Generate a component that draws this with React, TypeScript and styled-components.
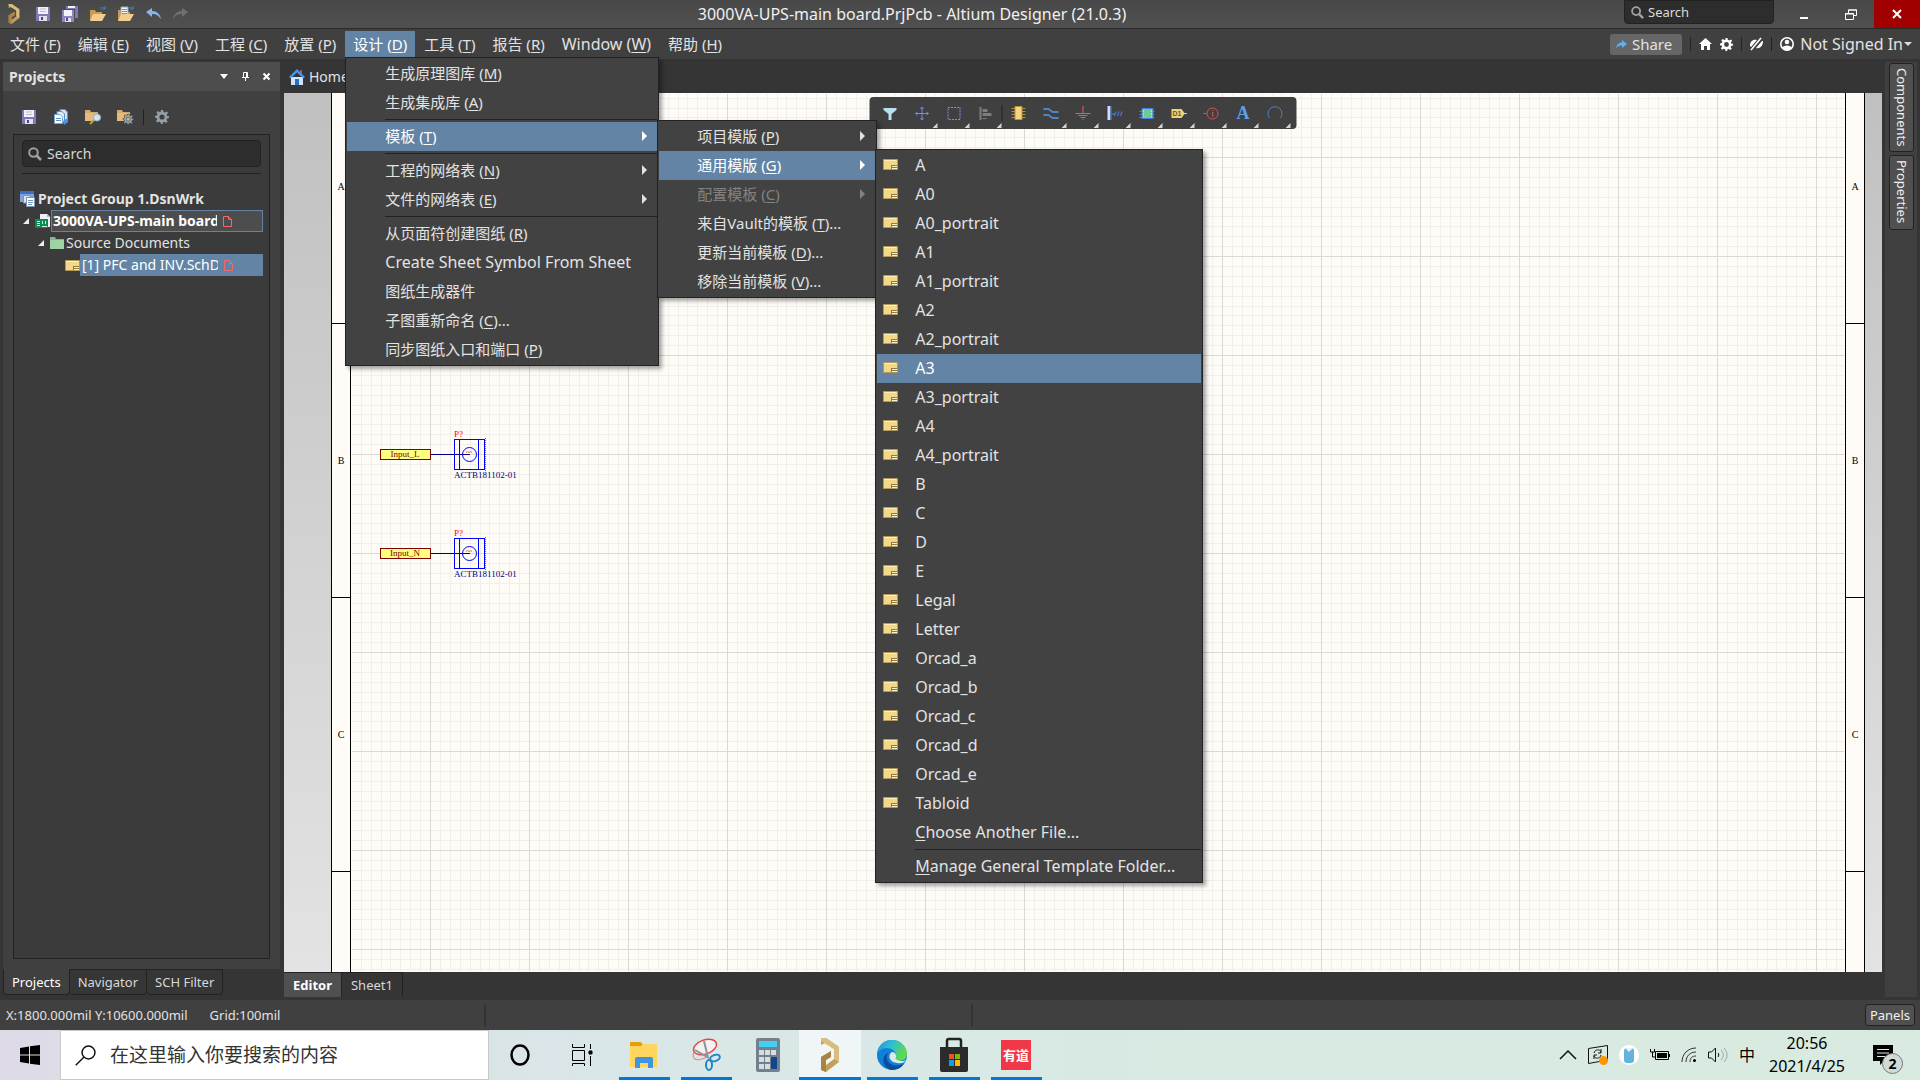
import React from "react";
import styled, { createGlobalStyle, css } from "styled-components";

const UI_FONT = `"Noto Sans", "Noto Sans CJK SC", sans-serif`;
const c = {
  frame: "#353535",
  panel: "#404040",
  line: "#222222",
  text: "#e2e2e2",
  accent: "#6384a4",
};

const GlobalStyle = createGlobalStyle`
  *, *::before, *::after { box-sizing: border-box; }
  body { margin: 0; overflow: hidden; }
  button, input { font: inherit; color: inherit; border: 0; padding: 0; background: none; outline: 0; }
  ul { list-style: none; margin: 0; padding: 0; }
  svg { display: block; flex: none; overflow: visible; }
  u { text-underline-offset: 2px; }
`;

const Screen = styled.div`
  height: 100vh;
  display: flex;
  flex-direction: column;
  background: ${c.frame};
  color: ${c.text};
  font: 14px/20px ${UI_FONT};
`;

/* ---------- title bar ---------- */
const TitleBar = styled.header`
  height: 29px;
  flex: none;
  display: flex;
  align-items: stretch;
  background: linear-gradient(#484848, #505050);
  border-bottom: 1px solid #2b2b2b;
`;
const QuickTools = styled.div`
  display: flex;
  align-items: center;
  gap: 12px;
  padding-left: 4px;
  width: 200px;
`;
const IconButton = styled.button`
  display: grid;
  place-items: center;
`;
const Title = styled.h1`
  flex: 1;
  margin: 0;
  font-size: 16px;
  font-weight: 400;
  line-height: 28px;
  text-align: center;
  color: #f0f0f0;
`;
const TitleSearch = styled.label`
  display: flex;
  align-items: center;
  gap: 4px;
  width: 150px;
  height: 24px;
  padding: 0 6px;
  margin-right: 8px;
  background: #2d2d2d;
  border: 1px solid ${c.line};
  border-radius: 0 0 4px 4px;
  input { width: 100%; font-size: 13px; }
  input::placeholder { color: #dcdcdc; opacity: 1; }
`;
const WindowButton = styled.button<{ $close?: boolean }>`
  width: 46px;
  height: 28px;
  display: grid;
  place-items: center;
  background: ${(p) => (p.$close ? "#a00000" : "transparent")};
`;

/* ---------- menu bar ---------- */
const MenuBar = styled.nav`
  height: 30px;
  flex: none;
  display: flex;
  justify-content: space-between;
  padding: 2px 8px 2px 2px;
  background: ${c.panel};
  font-size: 15px;
`;
const MenuTitles = styled.ul`
  display: flex;
  gap: 1px;
`;
const MenuSlot = styled.li`
  position: relative;
`;
const MenuTitle = styled.button<{ $open?: boolean }>`
  height: 26px;
  padding: 0 8px;
  line-height: 26px;
  white-space: nowrap;
  background: ${(p) => (p.$open ? c.accent : "transparent")};
  color: ${(p) => (p.$open ? "#fff" : c.text)};
`;
const CaptionText = styled.span<{ $latin: boolean }>`
  font-size: ${(p) => (p.$latin ? 16 : 15)}px;
`;
const Account = styled.div`
  display: flex;
  align-items: center;
  gap: 8px;
  height: 26px;
`;
const ShareButton = styled.button`
  display: flex;
  align-items: center;
  gap: 5px;
  height: 21px;
  padding: 0 10px 0 6px;
  border-radius: 3px;
  background: #666;
`;
const AccountButton = styled.button`
  display: flex;
  align-items: center;
  gap: 6px;
  white-space: nowrap;
  font-size: 16px;
`;
const Caret = styled.span`
  border: 4px solid transparent;
  border-top-color: #ddd;
  border-bottom: 0;
  margin-left: -5px;
`;
const Rule = styled.span<{ $h: number }>`
  width: 1px;
  height: ${(p) => p.$h}px;
  background: #222;
`;

/* ---------- drop-down menus ---------- */
const Menu = styled.ul<{ $width: number; $sub?: boolean }>`
  position: absolute;
  z-index: 10;
  top: ${(p) => (p.$sub ? "-2px" : "100%")};
  left: ${(p) => (p.$sub ? "100%" : "0")};
  width: ${(p) => p.$width}px;
  padding: 1px;
  border: 1px solid ${c.line};
  background: #424242;
  box-shadow: 3px 3px 4px rgba(0, 0, 0, 0.35);
`;
const MenuRow = styled.li`
  position: relative;
`;
const MenuButton = styled.button<{ $active?: boolean }>`
  display: grid;
  grid-template-columns: 32px 1fr 6px;
  align-items: center;
  width: 100%;
  height: 29px;
  padding: 0 9px 2px 6px;
  text-align: left;
  white-space: nowrap;
  line-height: 26px;
  color: ${(p) => (p.$active ? "#fff" : c.text)};
  background: ${(p) => (p.$active ? c.accent : "transparent")};
  &:disabled { color: #828282; }
`;
const Arrow = styled.span`
  border: 5px solid transparent;
  border-left-color: currentColor;
  border-right: 0;
`;
const Separator = styled.li`
  height: 5px;
  margin-left: 38px;
  padding-top: 2px;
  &::before { content: ""; display: block; height: 1px; background: ${c.line}; }
`;

/* ---------- body ---------- */
const Workspace = styled.main`
  flex: 1;
  min-height: 0;
  display: flex;
`;
const Side = styled.aside`
  width: 281px;
  flex: none;
  display: flex;
  flex-direction: column;
  padding: 3px 1px 5px 3px;
`;
const Panel = styled.section`
  flex: 1;
  min-height: 0;
  display: flex;
  flex-direction: column;
  padding-bottom: 10px;
  background: ${c.panel};
`;
const PanelHeader = styled.header`
  height: 29px;
  display: flex;
  align-items: center;
  gap: 14px;
  padding: 0 10px 0 6px;
  background: #4d4d4d;
`;
const PanelName = styled.h2`
  flex: 1;
  margin: 0;
  font-size: 14px;
  font-weight: 700;
`;
const PanelTools = styled.div`
  height: 43px;
  display: flex;
  align-items: center;
  gap: 4px;
  padding: 9px 0 0 12px;
  > button { width: 28px; }
`;
const TreeBox = styled.div`
  flex: 1;
  margin: 0 10px;
  padding: 5px 8px;
  border: 1px solid ${c.line};
  background: #3b3b3b;
`;
const PanelSearch = styled.label`
  display: flex;
  align-items: center;
  gap: 5px;
  height: 27px;
  padding: 0 5px;
  border: 1px solid ${c.line};
  border-radius: 4px;
  background: #2d2d2d;
  input { width: 100%; }
  input::placeholder { color: #d6d6d6; opacity: 1; }
`;
const Tree = styled.ul`
  margin-top: 6px;
  padding-top: 14px;
  border-top: 1px solid ${c.line};
`;
const TreeRow = styled.li<{ $depth: number }>`
  display: flex;
  align-items: center;
  height: 22px;
  padding-left: ${(p) => p.$depth * 15}px;
  margin-left: -2px;
  margin-right: -2px;
  font-weight: ${(p) => (p.$depth < 1 ? 700 : 400)};
`;
const Expander = styled.span`
  width: 6px;
  height: 6px;
  margin: 0 6px 0 3px;
  background: #eee;
  clip-path: polygon(100% 0, 100% 100%, 0 100%);
`;
const TreeLabel = styled.span<{ $kind?: "focus" | "select" }>`
  flex: 1;
  min-width: 0;
  height: 22px;
  display: flex;
  align-items: center;
  gap: 6px;
  padding-left: 2px;
  ${(p) =>
    p.$kind === "focus" &&
    css`border: 1px solid ${c.accent}; background: #4d4d4d; color: #fff; font-weight: 700; padding-left: 1px;`}
  ${(p) => p.$kind === "select" && css`background: ${c.accent}; color: #fff;`}
  > span { flex: 1; overflow: hidden; white-space: nowrap; }
  > svg { margin-right: 30px; }
`;
const PanelTabs = styled.div`
  display: flex;
  height: 26px;
`;
const PanelTab = styled.button<{ $active?: boolean }>`
  padding: 0 8px;
  line-height: 24px;
  font-size: 13px;
  border: 1px solid ${c.line};
  border-left-width: ${(p) => (p.$active ? 1 : 0)}px;
  border-top-color: ${(p) => (p.$active ? c.panel : c.line)};
  border-radius: 0 0 4px 4px;
  background: ${(p) => (p.$active ? c.panel : "#363636")};
  color: ${(p) => (p.$active ? "#fff" : "#d8d8d8")};
`;

const Editor = styled.section`
  flex: 1;
  min-width: 0;
  display: flex;
  flex-direction: column;
  margin-left: 3px;
`;
const DocTabs = styled.div`
  height: 34px;
  flex: none;
  display: flex;
  align-items: center;
  padding: 2px 0 0 5px;
`;
const DocTab = styled.button`
  display: flex;
  align-items: center;
  gap: 4px;
`;
const Canvas = styled.div`
  position: relative;
  flex: 1;
  min-height: 0;
  display: flex;
  background: #fffcf7;
  color: #000;
`;
const Margin = styled.div<{ $w: number }>`
  width: ${(p) => p.$w}px;
  background: linear-gradient(#c0c0c0, #e3e3e3);
`;
const Ruler = styled.div`
  width: 20px;
  overflow: hidden;
  border: solid #000;
  border-width: 0 1px;
`;
const Zone = styled.div`
  height: 274px;
  display: grid;
  place-items: center;
  border-bottom: 1px solid #000;
  font: 10px/12px "Liberation Serif", serif;
  &:first-child { margin-top: -43px; }
`;
const Sheet = styled.div`
  flex: 1;
  min-width: 0;
  padding: 1px;
  > svg { width: 100%; height: 100%; overflow: hidden; }
`;
const FloatingBar = styled.div`
  position: absolute;
  top: 4px;
  left: 50%;
  transform: translateX(-50%);
  display: flex;
  align-items: center;
  height: 32px;
  padding: 0 6px 0 4px;
  border-radius: 4px;
  background: ${c.panel};
`;
const ToolButton = styled.button<{ $more?: boolean }>`
  width: 32px;
  height: 32px;
  display: grid;
  place-items: center;
  background: ${(p) =>
    p.$more ? "linear-gradient(135deg, transparent 50%, #d0d0d0 50%) right bottom 1px / 5px 5px no-repeat" : "none"};
`;
const ViewTabs = styled.div`
  height: 28px;
  display: flex;
  align-items: flex-start;
`;
const ViewTab = styled.button<{ $active?: boolean }>`
  height: 25px;
  padding: 0 9px;
  font-size: 13px;
  font-weight: ${(p) => (p.$active ? 700 : 400)};
  color: ${(p) => (p.$active ? "#fff" : "#d8d8d8")};
  background: ${(p) => (p.$active ? "#505050" : "transparent")};
  border: solid ${c.line};
  border-width: 1px 1px 0 0;
`;
const Dock = styled.aside`
  width: 32px;
  flex: none;
  display: flex;
  flex-direction: column;
  align-items: center;
  gap: 3px;
  margin: 3px;
  padding-top: 1px;
  background: ${c.panel};
`;
const DockTab = styled.button`
  width: 25px;
  padding: 4px 0 5px;
  writing-mode: vertical-rl;
  font-size: 13px;
  line-height: 23px;
  border: 1px solid ${c.line};
  border-radius: 3px;
  background: #505050;
  color: #eee;
`;

/* ---------- status bar ---------- */
const StatusBar = styled.footer`
  height: 30px;
  flex: none;
  display: flex;
  align-items: center;
  padding-right: 5px;
  background: ${c.panel};
  font-size: 13px;
`;
const StatusCell = styled.div`
  display: flex;
  gap: 22px;
  width: 25.4%;
  height: 23px;
  padding-left: 6px;
  align-items: center;
  border-right: 2px solid #343434;
`;
const StatusRest = styled.div`
  flex: 1;
  display: flex;
  justify-content: flex-end;
`;
const PanelsButton = styled.button`
  height: 22px;
  padding: 0 4px;
  border: 1px solid ${c.line};
  border-radius: 3px;
  background: #505050;
  color: #f0f0f0;
`;

/* ---------- taskbar ---------- */
const Taskbar = styled.footer`
  height: 50px;
  flex: none;
  display: flex;
  align-items: stretch;
  color: #000;
  background: linear-gradient(90deg, #dddae6, #d9e6e8 30%, #d8eae2 65%, #d9eae0);
`;
const StartButton = styled.button`
  width: 60px;
  display: grid;
  place-items: center;
`;
const TaskSearch = styled.label`
  width: 429px;
  display: flex;
  align-items: center;
  gap: 14px;
  padding: 0 14px;
  border: 1px solid #c8c8c8;
  background: #fff;
  font-size: 19px;
  input { flex: 1; }
  input::placeholder { color: #333; opacity: 1; }
`;
const TaskButton = styled.button<{ $running?: boolean; $active?: boolean }>`
  width: 62px;
  display: grid;
  place-items: center;
  background: ${(p) => (p.$active ? "#f0f6f7" : "transparent")};
  background-image: ${(p) => (p.$running || p.$active ? "linear-gradient(#0078d7, #0078d7)" : "none")};
  background-repeat: no-repeat;
  background-position: center bottom;
  background-size: ${(p) => (p.$active ? "100%" : "51px")} 3px;
`;
const Tray = styled.div`
  margin-left: auto;
  display: flex;
  align-items: center;
  gap: 11px;
  padding-right: 13px;
`;
const TrayText = styled.span`
  font-size: 16px;
`;
const Clock = styled.time`
  width: 82px;
  text-align: center;
  font-size: 16px;
  line-height: 23px;
`;
const Notifications = styled.button`
  position: relative;
  width: 48px;
  height: 40px;
  display: grid;
  place-items: center;
`;
const Badge = styled.span`
  position: absolute;
  left: 23px;
  top: 18px;
  width: 21px;
  height: 21px;
  border: 1px solid #777;
  border-radius: 50%;
  background: #d2dad8;
  font: 700 14px/19px ${UI_FONT};
`;

/* ---------- drawings ---------- */
const AltiumMark = ({ w, h }: { w: number; h: number }) => (
  <svg width={w} height={h} viewBox="0 0 20 34">
    <path d="M1 0L6 0L19 9V24L6 34L1 32V19L11 13V19L6 22V27L14 21V11L5 5L1 7Z" fill="#c3a05a" />
    <path d="M6 0L19 9V24L14 21V11L1 3V0Z" fill="#d8bd7c" />
    <path d="M1 19L11 13V19L6 22V34L1 32Z" fill="#a78443" />
  </svg>
);
const Floppy = () => (
  <svg width="14" height="14" viewBox="0 0 14 14">
    <path d="M0 0H14V14H0Z" fill="#7f79b8" />
    <path d="M2 0H12V7H2Z" fill="#f2f2fa" />
    <path d="M3 9H11V14H3Z" fill="#e0e0ee" />
    <path d="M5 10H7V13H5Z" fill="#4a4688" />
    <path d="M4 2H10M4 4.500H10" stroke="#b9b9d0" />
  </svg>
);
const FloppyStack = () => (
  <svg width="16" height="16" viewBox="0 0 16 16">
    <path d="M4 0H16V12H13V3H4Z" fill="#7f79b8" />
    <path d="M6 0H13V2H6Z" fill="#f2f2fa" />
    <path d="M0 4H12V16H0Z" fill="#8c86c4" />
    <path d="M2 4H10V10H2Z" fill="#f2f2fa" />
    <path d="M3 12H9V16H3Z" fill="#e0e0ee" />
    <path d="M4 12H6V15H4Z" fill="#4a4688" />
  </svg>
);
const OpenFolder = ({ sheet }: { sheet?: boolean }) => (
  <svg width="16" height="16" viewBox="0 0 16 16">
    <path d="M0 4H5L6 6H12V14H0Z" fill="#c99a51" />
    {sheet && <path d="M3 1H10V11H3Z" fill="#f4f6fa" stroke="#8ca6c4" />}
    {sheet && <path d="M4 3.500H9M4 5.500H9M4 7.500H9" stroke="#6c94c2" />}
    <path d="M3 8H16L12 15H0Z" fill="#f2ce8c" />
    <path d="M10 3C11 1 13 1 15 3M15 0V3H12" fill="none" stroke="#4d81ab" />
  </svg>
);
const TurnArrow = ({ redo }: { redo?: boolean }) => (
  <svg width="15" height="12" viewBox="0 0 15 12">
    <path
      d={redo ? "M15 4L9 0V3C4 3 1 6 0 11C3 7 5 6 9 6V9Z" : "M0 4L6 0V3C11 3 14 6 15 11C12 7 10 6 6 6V9Z"}
      fill={redo ? "#6f6f6f" : "#8ab4ee"}
    />
  </svg>
);
const Lens = ({ size, color, flip }: { size: number; color: string; flip?: boolean }) => (
  <svg width={size} height={size} viewBox="0 0 14 14" fill="none" stroke={color}>
    {flip ? (
      <g strokeWidth="1"><circle cx="9" cy="5" r="4.300" /><path d="M6 8L0.500 13.500" /></g>
    ) : (
      <g strokeWidth="2"><circle cx="5.500" cy="5.500" r="4.300" /><path d="M8.500 8.500L13 13" strokeWidth="2.600" /></g>
    )}
  </svg>
);
const GEAR =
  "M6 0H8L8.500 2L10 2.600L12 1.500L13 3L11.700 4.600L12 6L14 6.300V8L12 8.500L11.500 10L12.600 11.700L11 13L9.400 11.800L8 12.200L7.700 14H6L5.500 12.200L4 11.600L2.300 12.600L1 11L2.200 9.400L1.800 8L0 7.700V6L1.900 5.500L2.500 4L1.400 2.300L3 1L4.600 2.200L5.700 1.900ZM7 4.400A2.600 2.600 0 1 0 7 9.600A2.600 2.600 0 1 0 7 4.400Z";
const Gear = ({ size = 14, color = "#93a0a8" }) => (
  <svg width={size} height={size} viewBox="0 0 14 14"><path d={GEAR} fill={color} fillRule="evenodd" /></svg>
);
const Docs = () => (
  <svg width="14" height="16" viewBox="0 0 14 16">
    <path d="M6 0.500H11L13.500 3V11H6Z" fill="#cfe3f8" stroke="#5a8fc8" />
    <path d="M3 2.500H8L10.500 5V13H3Z" fill="#dcebfa" stroke="#5a8fc8" />
    <path d="M0.500 5.500H6L8.500 8V14.500H0.500Z" fill="#fff" stroke="#7ba6d2" />
    <path d="M2 9.500H7M2 11.500H7" stroke="#5a8fc8" />
    <path d="M9 12L14 9V13L10 16Z" fill="#4a94dc" />
  </svg>
);
const FolderWith = ({ gear }: { gear?: boolean }) => (
  <svg width="17" height="16" viewBox="0 0 17 16">
    <path d="M0 1H5L6 3H13V12H0Z" fill="#d6a968" />
    <path d="M0 4H13V12H0Z" fill="#e3bb7e" />
    {gear ? (
      <g transform="translate(6 5) scale(.75)"><path d={GEAR} fill="#9caab2" stroke="#46525a" fillRule="evenodd" /></g>
    ) : (
      <g><path d="M9 11L5 15" stroke="#c99a51" strokeWidth="2" /><circle cx="12" cy="8.500" r="3.600" fill="#cfe6f5" stroke="#8ab" /></g>
    )}
  </svg>
);
const SheetIcon = () => (
  <svg width="15" height="11" viewBox="0 0 15 11">
    <path d="M.5 .5H14.500V10.500H.5Z" fill="#f3d987" stroke="#b39a5b" />
    <path d="M1.500 1.500H13" stroke="#fff0b8" />
    <path d="M8 6H14V10H8Z" fill="#8f7a45" />
    <path d="M9 7.500H14M9 9.500H14" stroke="#fff3c4" />
  </svg>
);
const GroupIcon = () => (
  <svg width="16" height="16" viewBox="0 0 16 16">
    <path d="M0 0H14V11H0Z" fill="#7fa3dc" />
    <path d="M0 0H14V3H0Z" fill="#3f6fc4" />
    <path d="M3.500 4.500H10V12H3.500Z" fill="#d7e4f4" stroke="#7b93b4" />
    <path d="M6.500 6.500H14.500V15.500H6.500Z" fill="#fff" stroke="#7b93b4" />
    <path d="M8 9.500H13M8 11.500H13M8 13.500H12" stroke="#7b93b4" />
  </svg>
);
const BoardIcon = () => (
  <svg width="16" height="15" viewBox="0 0 16 15">
    <path d="M5 0H12L15 3V13H5Z" fill="#eef0f8" />
    <path d="M12 0V3H15Z" fill="#b4b8d4" />
    <path d="M0 5H13V14H0Z" fill="#0c8a52" />
    <path d="M2 7.500H5M2 9.500H5M2 11.500H5M7.500 7V10M10.500 7V10M7 12.500H12" stroke="#d8f4e4" />
  </svg>
);
const GreenFolder = () => (
  <svg width="14" height="12" viewBox="0 0 14 12">
    <path d="M0 0H5L6 2H14V12H0Z" fill="#7fb98a" />
    <path d="M0 3H14V12H0Z" fill="#9ed3a5" />
  </svg>
);
const ModifiedIcon = () => (
  <svg width="9" height="11" viewBox="0 0 9 11" fill="none" stroke="#f2696b">
    <path d="M.5 .5H5.500L8.500 3.500V10.500H.5Z M5.500 .5V3.500H8.500" />
  </svg>
);
const HomeIcon = () => (
  <svg width="16" height="16" viewBox="0 0 16 16">
    <path d="M2 8H14V16H2Z" fill="#cfe4fb" />
    <path d="M6 10H10V16H6Z" fill="#2a6fc4" />
    <path d="M11 1H13V5H11Z" fill="#b55" />
    <path d="M8 0L16 8L14.500 9.500L8 3.500L1.500 9.500L0 8Z" fill="#3d97f3" />
  </svg>
);

const tools: { name: string; more?: boolean; art: React.ReactNode }[] = [
  { name: "Filter", art: <path d="M1 2H14V4L9 8V14H6V8L1 4Z" fill="#b9e0ec" /> },
  { name: "Move", more: true, art: <path d="M7.500 1V14M1 7.500H14M6 3L7.500 1L9 3M6 12L7.500 14L9 12M3 6L1 7.500L3 9M12 6L14 7.500L12 9" stroke="#6f8fe0" fill="none" /> },
  { name: "Select", more: true, art: <path d="M1.500 1.500H13.500V13.500H1.500Z" stroke="#7392e6" strokeDasharray="2 1" fill="none" /> },
  { name: "Align", more: true, art: <g fill="#7d7d7d"><path d="M1 1H3V14H1ZM4 3H9V6H4Z" /><path d="M4 7H13V10H4ZM4 12H8V13H4Z" /></g> },
  { name: "Part", art: <g><path d="M0 2.500H14M0 5.500H14M0 8.500H14M0 11.500H14" stroke="#a88f3c" /><path d="M3.500 .5H10.500V13.500H3.500Z" fill="#f8d37c" stroke="#b8943c" /></g> },
  { name: "Wire", more: true, art: <path d="M0 3H5L9 6H15M0 9H5L9 12H15" stroke="#4d86c4" strokeWidth="2" fill="none" /> },
  { name: "Power port", more: true, art: <path d="M7.500 0V7M0 7.500H15M3 9.500H12M5 11.500H10M7 13.500H8" stroke="#ee5b55" fill="none" /> },
  { name: "Bus", more: true, art: <g><path d="M0 0H3V14H0Z" fill="#cfe0fa" /><path d="M3.500 0V14M4 8H8M7 10L8.500 5.500M10 10L11.500 5.500M13 10L14.500 5.500" stroke="#4a72c8" strokeWidth="1.300" fill="none" /></g> },
  { name: "Sheet symbol", more: true, art: <g><path d="M0 5.500H15M0 8.500H15M0 11.500H15" stroke="#4f84e0" /><path d="M2.500 2.500H13.500V12.500H2.500Z" fill="#6cc99a" stroke="#4f7be0" /><path d="M4 4V11M12 4V11" stroke="#e8e070" strokeDasharray="2 1" /></g> },
  { name: "Net label", more: true, art: <g><path d="M0 3H10L13 7H15.500V8H13L10 12H0Z" fill="#ecd27a" /><text x="1" y="10" fontFamily="Liberation Sans, sans-serif" fontWeight="700" fontSize="7" fill="#70551c">D1</text></g> },
  { name: "Directive", more: true, art: <g><path d="M0 7.500H3" stroke="#e0514e" /><circle cx="9" cy="7.500" r="5.500" stroke="#e0514e" fill="none" /><text x="9" y="11" textAnchor="middle" fontFamily="Liberation Sans, sans-serif" fontSize="9" fill="#f0605c">i</text></g> },
  { name: "Text", more: true, art: <text x="7.500" y="13" textAnchor="middle" fontFamily="Liberation Serif, serif" fontWeight="700" fontSize="18" fill="#5f9fe6">A</text> },
  { name: "Arc", more: true, art: <path d="M2 12A7 7 0 1 1 13 12" stroke="#4d81c0" fill="none" /> },
];

const MINOR = [10, 20, 30, 40, 50, 59, 69, 79, 89];
const Drawing = () => (
  <svg shapeRendering="crispEdges">
    <defs>
      <pattern id="grid" x="78" y="63" width="99" height="99" patternUnits="userSpaceOnUse">
        {MINOR.map((m) => (
          <path key={m} d={`M${m} 0h1v99h-1zM0 ${m}h99v1h-99z`} fill="#efefeb" />
        ))}
        <path d="M0 0h99v1h-99zM0 0h1v99h-1z" fill="#d9d9d5" />
      </pattern>
    </defs>
    <rect width="100%" height="100%" fill="url(#grid)" />
    {["Input_L", "Input_N"].map((name, i) => (
      <g key={name} transform={`translate(28 ${355 + i * 99})`} fontFamily="Liberation Serif, serif" fontSize="9">
        <rect x=".5" y=".5" width="50" height="10" fill="#ffff80" stroke="#800000" />
        <text x="25" y="8" textAnchor="middle" fill="#800000">{name}</text>
        <path d="M51 5.500H90" stroke="#000080" />
        <path d="M74.500 -9.500H104.500V20.500H74.500ZM79.500 -9.500V20.500M98.500 -9.500V20.500" fill="none" stroke="#0000ff" />
        <path d="M105.500 -11V22" stroke="#e33" strokeDasharray="1 1" />
        <circle cx="89.500" cy="5.500" r="7" fill="none" stroke="#0000ff" shapeRendering="auto" />
        <path d="M86 4L87.500 2L89 4L90.500 2L92 4" fill="none" stroke="#f08050" shapeRendering="auto" />
        <text x="74" y="-12" fill="#f00">P?</text>
        <text x="74" y="29" fill="#000080">ACTB181102-01</text>
      </g>
    ))}
  </svg>
);

/* ---------- data ---------- */
/* An "&" marks the access key of a caption. */
const Caption = ({ text }: { text: string }) => {
  const at = text.indexOf("&");
  const latin = !/[\u4e00-\u9fff]/.test(text);
  if (at < 0) return <CaptionText $latin={latin}>{text}</CaptionText>;
  return (
    <CaptionText $latin={latin}>
      {text.slice(0, at)}
      <u>{text[at + 1]}</u>
      {text.slice(at + 2)}
    </CaptionText>
  );
};

type Entry = { label: string; arrow?: boolean; active?: boolean; disabled?: boolean; icon?: boolean; sub?: { width: number; items: (Entry | null)[] } };

const sheets = ["A", "A0", "A0_portrait", "A1", "A1_portrait", "A2", "A2_portrait", "A3", "A3_portrait", "A4", "A4_portrait", "B", "C", "D", "E", "Legal", "Letter", "Orcad_a", "Orcad_b", "Orcad_c", "Orcad_d", "Orcad_e", "Tabloid"];

const generalTemplates: (Entry | null)[] = [
  ...sheets.map((label) => ({ label, icon: true, active: label === "A3" })),
  { label: "&Choose Another File..." },
  null,
  { label: "&Manage General Template Folder..." },
];
const templateMenu: (Entry | null)[] = [
  { label: "项目模版 (&P)", arrow: true },
  { label: "通用模版 (&G)", arrow: true, active: true, sub: { width: 328, items: generalTemplates } },
  { label: "配置模板 (&C)", arrow: true, disabled: true },
  { label: "来自Vault的模板 (&T)..." },
  { label: "更新当前模板 (&D)..." },
  { label: "移除当前模板 (&V)..." },
];
const designMenu: (Entry | null)[] = [
  { label: "生成原理图库 (&M)" },
  { label: "生成集成库 (&A)" },
  null,
  { label: "模板 (&T)", arrow: true, active: true, sub: { width: 220, items: templateMenu } },
  null,
  { label: "工程的网络表 (&N)", arrow: true },
  { label: "文件的网络表 (&E)", arrow: true },
  null,
  { label: "从页面符创建图纸 (&R)" },
  { label: "Create Sheet S&ymbol From Sheet" },
  { label: "图纸生成器件" },
  { label: "子图重新命名 (&C)..." },
  { label: "同步图纸入口和端口 (&P)" },
];
const menuTitles = ["文件 (&F)", "编辑 (&E)", "视图 (&V)", "工程 (&C)", "放置 (&P)", "设计 (&D)", "工具 (&T)", "报告 (&R)", "Window (&W)", "帮助 (&H)"];

const MenuList = ({ items, width, sub }: { items: (Entry | null)[]; width: number; sub?: boolean }) => (
  <Menu $width={width} $sub={sub}>
    {items.map((it, i) =>
      it === null ? (
        <Separator key={i} />
      ) : (
        <MenuRow key={i}>
          <MenuButton $active={it.active} disabled={it.disabled}>
            <span>{it.icon && <SheetIcon />}</span>
            <Caption text={it.label} />
            {it.arrow && <Arrow />}
          </MenuButton>
          {it.sub && <MenuList items={it.sub.items} width={it.sub.width} sub />}
        </MenuRow>
      ),
    )}
  </Menu>
);

const RulerStrip = () => (
  <Ruler>
    {["A", "B", "C", ""].map((z) => (
      <Zone key={z}>{z}</Zone>
    ))}
  </Ruler>
);

export default function App() {
  return (
    <Screen>
      <GlobalStyle />
      <TitleBar>
        <QuickTools>
          <IconButton aria-label="Altium"><AltiumMark w={20} h={20} /></IconButton>
          <IconButton aria-label="Save"><Floppy /></IconButton>
          <IconButton aria-label="Save all"><FloppyStack /></IconButton>
          <IconButton aria-label="Open"><OpenFolder /></IconButton>
          <IconButton aria-label="Open project"><OpenFolder sheet /></IconButton>
          <IconButton aria-label="Undo"><TurnArrow /></IconButton>
          <IconButton aria-label="Redo"><TurnArrow redo /></IconButton>
        </QuickTools>
        <Title>3000VA-UPS-main board.PrjPcb - Altium Designer (21.0.3)</Title>
        <TitleSearch>
          <Lens size={13} color="#a0a0a0" />
          <input placeholder="Search" aria-label="Search" />
        </TitleSearch>
        <WindowButton aria-label="Minimize">
          <svg width="10" height="10"><path d="M0 8H8V10H0Z" fill="#fff" /></svg>
        </WindowButton>
        <WindowButton aria-label="Restore">
          <svg width="12" height="11" fill="none" stroke="#fff"><path d="M3.500 4V1H11.500V6.500H9M.5 4.500H8.500V10.500H.5ZM3 1H12M0 5H9" /></svg>
        </WindowButton>
        <WindowButton $close aria-label="Close">
          <svg width="10" height="10" stroke="#fff" strokeWidth="2"><path d="M1 1L9 9M9 1L1 9" /></svg>
        </WindowButton>
      </TitleBar>

      <MenuBar>
        <MenuTitles>
          {menuTitles.map((t) => {
            const open = t.startsWith("设计");
            return (
              <MenuSlot key={t}>
                <MenuTitle $open={open}><Caption text={t} /></MenuTitle>
                {open && <MenuList items={designMenu} width={314} />}
              </MenuSlot>
            );
          })}
        </MenuTitles>
        <Account>
          <ShareButton>
            <svg width="11" height="9" viewBox="0 0 11 9"><path d="M11 4L6 0V2.500C3 2.500 1 4 0 8C2 6 4 5.500 6 5.500V8Z" fill="#62b0f8" /></svg>
            Share
          </ShareButton>
          <Rule $h={14} />
          <IconButton aria-label="Home">
            <svg width="13" height="12" viewBox="0 0 13 12"><path d="M6.500 0L13 6H11V12H8V8H5V12H2V6H0Z" fill="#fff" /></svg>
          </IconButton>
          <IconButton aria-label="Settings"><Gear size={13} color="#fff" /></IconButton>
          <Rule $h={14} />
          <IconButton aria-label="Offline">
            <svg width="13" height="12" viewBox="0 0 13 12"><path d="M0 8C0 3 3 1 7 2L1 9ZM13 3C13 8 10 11 6 10L12 3Z" fill="#fff" /><path d="M1 12L11 0" stroke="#fff" strokeWidth="1.500" /></svg>
          </IconButton>
          <Rule $h={14} />
          <AccountButton>
            <svg width="14" height="14" viewBox="0 0 14 14"><circle cx="7" cy="7" r="6.200" fill="none" stroke="#fff" strokeWidth="1.600" /><circle cx="7" cy="5" r="2.300" fill="#fff" /><path d="M2 11C3 7.500 11 7.500 12 11L7 14Z" fill="#fff" /></svg>
            Not Signed In
            <Caret />
          </AccountButton>
        </Account>
      </MenuBar>

      <Workspace>
        <Side>
          <Panel>
            <PanelHeader>
              <PanelName>Projects</PanelName>
              <IconButton aria-label="Panel menu"><svg width="8" height="5"><path d="M0 0H8L4 5Z" fill="#fff" /></svg></IconButton>
              <IconButton aria-label="Pin"><svg width="7" height="9" fill="none" stroke="#fff"><path d="M1.500 5V.5H5.500V5M4.500 0V5M0 5.500H7M3.500 5V9" /></svg></IconButton>
              <IconButton aria-label="Close panel"><svg width="7" height="7" stroke="#fff" strokeWidth="2"><path d="M.5 .5L6.500 6.500M6.500 .5L.5 6.500" /></svg></IconButton>
            </PanelHeader>
            <PanelTools>
              <IconButton aria-label="Save"><Floppy /></IconButton>
              <IconButton aria-label="Compile"><Docs /></IconButton>
              <IconButton aria-label="Explore"><FolderWith /></IconButton>
              <IconButton aria-label="Project options"><FolderWith gear /></IconButton>
              <Rule $h={16} />
              <IconButton aria-label="Settings"><Gear /></IconButton>
            </PanelTools>
            <TreeBox>
              <PanelSearch>
                <Lens size={14} color="#a0a0a0" />
                <input placeholder="Search" aria-label="Search projects" />
              </PanelSearch>
              <Tree>
                <TreeRow $depth={0}>
                  <GroupIcon />
                  <TreeLabel><span>Project Group 1.DsnWrk</span></TreeLabel>
                </TreeRow>
                <TreeRow $depth={0}>
                  <Expander />
                  <BoardIcon />
                  <TreeLabel $kind="focus"><span>3000VA-UPS-main board.PrjPcb</span><ModifiedIcon /></TreeLabel>
                </TreeRow>
                <TreeRow $depth={1}>
                  <Expander />
                  <GreenFolder />
                  <TreeLabel><span>Source Documents</span></TreeLabel>
                </TreeRow>
                <TreeRow $depth={3}>
                  <SheetIcon />
                  <TreeLabel $kind="select"><span>[1] PFC and INV.SchDoc</span><ModifiedIcon /></TreeLabel>
                </TreeRow>
              </Tree>
            </TreeBox>
          </Panel>
          <PanelTabs>
            <PanelTab $active>Projects</PanelTab>
            <PanelTab>Navigator</PanelTab>
            <PanelTab>SCH Filter</PanelTab>
          </PanelTabs>
        </Side>

        <Editor>
          <DocTabs>
            <DocTab><HomeIcon />Home</DocTab>
          </DocTabs>
          <Canvas>
            <Margin $w={47} />
            <RulerStrip />
            <Sheet><Drawing /></Sheet>
            <RulerStrip />
            <Margin $w={17} />
            <FloatingBar>
              {tools.map((t, i) => (
                <React.Fragment key={t.name}>
                  {i === 4 && <Rule $h={16} />}
                  <ToolButton $more={t.more} aria-label={t.name}>
                    <svg width="15" height="15" viewBox="0 0 15 15">{t.art}</svg>
                  </ToolButton>
                </React.Fragment>
              ))}
            </FloatingBar>
          </Canvas>
          <ViewTabs>
            <ViewTab $active>Editor</ViewTab>
            <ViewTab>Sheet1</ViewTab>
          </ViewTabs>
        </Editor>

        <Dock>
          <DockTab>Components</DockTab>
          <DockTab>Properties</DockTab>
        </Dock>
      </Workspace>

      <StatusBar>
        <StatusCell>
          <span>X:1800.000mil Y:10600.000mil</span>
          <span>Grid:100mil</span>
        </StatusCell>
        <StatusCell />
        <StatusRest><PanelsButton>Panels</PanelsButton></StatusRest>
      </StatusBar>

      <Taskbar>
        <StartButton aria-label="Start">
          <svg width="20" height="20" viewBox="0 0 20 20"><path d="M0 3L9 1.500V9.500H0ZM10 1.300L20 0V9.500H10ZM0 10.500H9V18.500L0 17ZM10 10.500H20V20L10 18.700Z" /></svg>
        </StartButton>
        <TaskSearch>
          <Lens size={21} color="#111" flip />
          <input placeholder="在这里输入你要搜索的内容" aria-label="搜索" />
        </TaskSearch>
        <TaskButton aria-label="Cortana">
          <svg width="20" height="22"><ellipse cx="10" cy="11" rx="8.500" ry="9.500" fill="none" stroke="#000" strokeWidth="2.500" /></svg>
        </TaskButton>
        <TaskButton aria-label="Task view">
          <svg width="22" height="22" fill="none" stroke="#000"><path d="M1.500 0V3.500H13.500V0M1.500 6.500H13.500V16.500H1.500ZM1.500 22V19.500H13.500V22M19.500 0V5M19.500 12V22" /><path d="M18 7H21V10H18Z" fill="#000" /></svg>
        </TaskButton>
        <TaskButton $running aria-label="File Explorer">
          <svg width="28" height="28" viewBox="0 0 28 28"><path d="M0 1H11L13 4H27V26H0Z" fill="#e2a100" /><path d="M0 5H11L13 3H27V26H0Z" fill="#ffd55e" /><path d="M5 27V18Q5 16 7 16H21Q23 16 23 18V27H18V22H10V27Z" fill="#3f96e0" /></svg>
        </TaskButton>
        <TaskButton $running aria-label="Snip">
          <svg width="30" height="34" viewBox="0 0 30 34" fill="none"><ellipse cx="14" cy="9" rx="12" ry="7" transform="rotate(-20 14 9)" fill="#f6f2f2" stroke="#e04848" strokeWidth="1.400" /><path d="M3 14C0 22 6 24 16 19" stroke="#e88" strokeWidth="1.200" /><path d="M13 3L17 20M4 12L18 20" stroke="#8b959c" strokeWidth="2" /><ellipse cx="18" cy="27" rx="3" ry="5" stroke="#1f86cc" strokeWidth="2" /><ellipse cx="24" cy="20" rx="5" ry="3" transform="rotate(-20 24 20)" stroke="#1f86cc" strokeWidth="2" /></svg>
        </TaskButton>
        <TaskButton aria-label="Calculator">
          <svg width="24" height="34" viewBox="0 0 24 34"><rect width="24" height="34" rx="2" fill="#74808c" /><path d="M3 3H21V9H3Z" fill="#42cdf5" /><path d="M3 12H8V17H3ZM9 12H14V17H9ZM15 12H20V17H15ZM3 19H8V24H3ZM9 19H14V24H9ZM3 26H8V31H3ZM9 26H14V31H9Z" fill="#d5dce4" /><path d="M15 19H21V31H15Z" fill="#10478f" /></svg>
        </TaskButton>
        <TaskButton $active aria-label="Altium Designer"><AltiumMark w={20} h={34} /></TaskButton>
        <TaskButton $running aria-label="Edge">
          <svg width="30" height="34" viewBox="0 0 30 34">
            <defs>
              <linearGradient id="edge" x1="0" y1="0" x2="1" y2=".4"><stop offset="0" stopColor="#1f8fe0" /><stop offset=".5" stopColor="#2fc0d0" /><stop offset="1" stopColor="#62d84e" /></linearGradient>
            </defs>
            <circle cx="15" cy="17" r="15" fill="#0f7fd8" />
            <path d="M0 16C1 6 8 2 15 2C24 2 30 9 30 16C30 21 26 23 22 23C18 23 18 21 19 19C20 14 15 10 10 10C5 10 1 13 0 16Z" fill="url(#edge)" />
            <path d="M11 15C7 22 13 31 27 26C22 33 12 34 8 28C5 23 6 17 11 15Z" fill="#0c4f9e" />
            <path d="M15 14C11 16 11 24 20 25C25 26 28 24 29 22C26 24 21 23 18.500 21C20 18 19 14 15 14Z" fill="#dceaea" />
          </svg>
        </TaskButton>
        <TaskButton $running aria-label="Store">
          <svg width="28" height="34" viewBox="0 0 28 34"><path d="M7 10V3Q7 1 9 1H19Q21 1 21 3V10" fill="none" stroke="#222" strokeWidth="2.500" /><path d="M0 9H28V32Q28 34 26 34H2Q0 34 0 32Z" fill="#2b2b2b" /><path d="M9 16H14V21H9Z" fill="#f25022" /><path d="M15 16H20V21H15Z" fill="#7fba00" /><path d="M9 22H14V28H9Z" fill="#00a4ef" /><path d="M15 22H20V28H15Z" fill="#ffb900" /></svg>
        </TaskButton>
        <TaskButton $running aria-label="有道">
          <svg width="30" height="34" viewBox="0 0 30 34"><path d="M0 2H30V32H0Z" fill="#f03848" /><text x="15" y="22" textAnchor="middle" fontFamily="Noto Sans CJK SC, sans-serif" fontWeight="700" fontSize="13" fill="#fff">有道</text></svg>
        </TaskButton>
        <Tray>
          <svg width="18" height="12" fill="none" stroke="#111" strokeWidth="1.500"><path d="M1 10L9 2L17 10" /></svg>
          <svg width="20" height="20" viewBox="0 0 20 20" fill="none" stroke="#111"><path d="M.5 3.500L19.500 .5V15L.5 18.500Z" /><path d="M6 8C7 4 12 4 13 7M13 4V8H10M13 10C12 14 7 14 6 11M6 14V10H9" /><circle cx="15.500" cy="15.500" r="4.500" fill="#ff9500" stroke="none" /></svg>
          <svg width="20" height="20" viewBox="0 0 20 20"><circle cx="10" cy="10" r="10" fill="#fff" /><rect x="5" y="3" width="10" height="15" rx="3" fill="#62b4dc" /><path d="M6 3L10 7L14 3Z" fill="#eef" /></svg>
          <svg width="20" height="16" viewBox="0 0 20 16"><path d="M5.500 4.500H18.500V12.500H5.500ZM2.500 5V10H6M.5 2V5H4.500V2M19.500 7V10" fill="none" stroke="#000" /><path d="M7 6H17V11H7Z" /></svg>
          <svg width="16" height="16" viewBox="0 0 16 16" fill="none" stroke="#333"><path d="M1 15C1 7 7 1 15 1M5 15C5 9 9 5 15 5M9 15C9 11 11 9 15 9" /><circle cx="13.500" cy="13.500" r="1.500" fill="#000" stroke="none" /></svg>
          <svg width="20" height="18" viewBox="0 0 20 18" fill="none" stroke="#111"><path d="M.5 6H3.500L7.500 2V16L3.500 12H.5ZM10 7C11 8 11 10 10 11" /><path d="M13 4C16 7 16 11 13 14M16 2C20 6 20 12 16 16" stroke="#9aa8a2" /></svg>
          <TrayText>中</TrayText>
          <Clock>20:56<br />2021/4/25</Clock>
          <Notifications aria-label="通知">
            <svg width="20" height="20" viewBox="0 0 20 20"><path d="M0 0H20V16H11L7 20V16H0Z" /><path d="M4 4.500H16M4 8H16M4 11.500H12" stroke="#dcebe4" /></svg>
            <Badge>2</Badge>
          </Notifications>
        </Tray>
      </Taskbar>
    </Screen>
  );
}
